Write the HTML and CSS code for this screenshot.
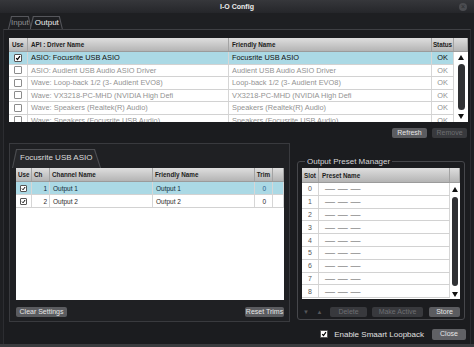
FILE: index.html
```html
<!DOCTYPE html>
<html lang="en">
<head>
    <meta charset="UTF-8">
    <meta name="viewport" content="width=device-width, initial-scale=1.0">
    <link rel="stylesheet" href="styles.css">
    <title>I-O Config</title>
</head>
<body>

<div class="window">
    <header class="titlebar">
        <span></span>
        <span class="title">I-O Config</span>
        <span class="close-dot">×</span>
    </header>

    <nav class="tabbar">
        <span class="tab">Input</span>
        <span class="tab active">Output</span>
    </nav>

    <main class="panel">
        <div class="grid drivers">
            <div class="grid-head">
                <div class="c">Use</div>
                <div class="c">API : Driver Name</div>
                <div class="c">Friendly Name</div>
                <div class="c center">Status</div>
                <div class="c"></div>
            </div>
            <div class="grid-body">
                <div class="rows">
                    <div class="grid-row selected">
                        <div class="c center"><span class="cb checked"><svg viewBox="0 0 8 8"><path d="M1.6 4.2 L3.3 6 L6.6 1.6"/></svg></span></div>
                        <div class="c">ASIO: Focusrite USB ASIO</div>
                        <div class="c">Focusrite USB ASIO</div>
                        <div class="c center">OK</div>
                    </div>
                    <div class="grid-row">
                        <div class="c center"><span class="cb"></span></div>
                        <div class="c">ASIO: Audient USB Audio ASIO Driver</div>
                        <div class="c">Audient USB Audio ASIO Driver</div>
                        <div class="c center">OK</div>
                    </div>
                    <div class="grid-row">
                        <div class="c center"><span class="cb"></span></div>
                        <div class="c">Wave: Loop-back 1/2 (3- Audient EVO8)</div>
                        <div class="c">Loop-back 1/2 (3- Audient EVO8)</div>
                        <div class="c center">OK</div>
                    </div>
                    <div class="grid-row">
                        <div class="c center"><span class="cb"></span></div>
                        <div class="c">Wave: VX3218-PC-MHD (NVIDIA High Defi</div>
                        <div class="c">VX3218-PC-MHD (NVIDIA High Defi</div>
                        <div class="c center">OK</div>
                    </div>
                    <div class="grid-row">
                        <div class="c center"><span class="cb"></span></div>
                        <div class="c">Wave: Speakers (Realtek(R) Audio)</div>
                        <div class="c">Speakers (Realtek(R) Audio)</div>
                        <div class="c center">OK</div>
                    </div>
                    <div class="grid-row">
                        <div class="c center"><span class="cb"></span></div>
                        <div class="c">Wave: Speakers (Focusrite USB Audio)</div>
                        <div class="c">Speakers (Focusrite USB Audio)</div>
                        <div class="c center">OK</div>
                    </div>
                </div>
                <div class="vscroll">
                    <span class="arrow up"></span>
                    <span class="thumb"></span>
                    <span class="arrow down"></span>
                </div>
            </div>
        </div>

        <div class="driver-actions">
            <button class="btn refresh">Refresh</button>
            <button class="btn off remove">Remove</button>
        </div>

        <div class="lower">
            <section class="channel-box">
                <div class="box-tabs">
                    <span class="tab device">Focusrite USB ASIO</span>
                </div>
                <div class="grid channels">
                    <div class="grid-head">
                        <div class="c">Use</div>
                        <div class="c">Ch</div>
                        <div class="c">Channel Name</div>
                        <div class="c">Friendly Name</div>
                        <div class="c center">Trim</div>
                        <div class="c"></div>
                    </div>
                    <div class="grid-row selected">
                        <div class="c center"><span class="cb checked"><svg viewBox="0 0 8 8"><path d="M1.6 4.2 L3.3 6 L6.6 1.6"/></svg></span></div>
                        <div class="c right">1</div>
                        <div class="c">Output 1</div>
                        <div class="c">Output 1</div>
                        <div class="c right trim">0</div>
                        <div class="c"></div>
                    </div>
                    <div class="grid-row">
                        <div class="c center"><span class="cb checked"><svg viewBox="0 0 8 8"><path d="M1.6 4.2 L3.3 6 L6.6 1.6"/></svg></span></div>
                        <div class="c right">2</div>
                        <div class="c">Output 2</div>
                        <div class="c">Output 2</div>
                        <div class="c right">0</div>
                        <div class="c"></div>
                    </div>
                </div>
                <div class="box-actions">
                    <button class="btn clear">Clear Settings</button>
                    <button class="btn reset">Reset Trims</button>
                </div>
            </section>

            <fieldset class="presets">
                <legend>Output Preset Manager</legend>
                <div class="grid preset-grid">
                    <div class="grid-head">
                        <div class="c center">Slot</div>
                        <div class="c">Preset Name</div>
                        <div class="c"></div>
                    </div>
                    <div class="grid-body">
                        <div class="rows">
                            <div class="grid-row"><div class="c center">0</div><div class="c dashes">— — —</div></div>
                            <div class="grid-row"><div class="c center">1</div><div class="c dashes">— — —</div></div>
                            <div class="grid-row"><div class="c center">2</div><div class="c dashes">— — —</div></div>
                            <div class="grid-row"><div class="c center">3</div><div class="c dashes">— — —</div></div>
                            <div class="grid-row"><div class="c center">4</div><div class="c dashes">— — —</div></div>
                            <div class="grid-row"><div class="c center">5</div><div class="c dashes">— — —</div></div>
                            <div class="grid-row"><div class="c center">6</div><div class="c dashes">— — —</div></div>
                            <div class="grid-row"><div class="c center">7</div><div class="c dashes">— — —</div></div>
                            <div class="grid-row"><div class="c center">8</div><div class="c dashes">— — —</div></div>
                        </div>
                        <div class="vscroll">
                            <span class="arrow up"></span>
                            <span class="thumb"></span>
                            <span class="arrow down"></span>
                        </div>
                    </div>
                </div>
                <div class="preset-actions">
                    <span class="move">▼ ▲</span>
                    <button class="btn off delete">Delete</button>
                    <button class="btn off make-active">Make Active</button>
                    <button class="btn store">Store</button>
                </div>
            </fieldset>
        </div>

        <footer class="footer">
            <span class="cb big checked"><svg viewBox="0 0 8 8"><path d="M1.6 4.2 L3.3 6 L6.6 1.6"/></svg></span>
            <span class="loopback">Enable Smaart Loopback</span>
            <button class="btn close">Close</button>
        </footer>
    </main>
</div>

</body>
</html>
```

FILE: styles.css
```css
* {
    box-sizing: border-box;
}

body {
    margin: 0;
    background: #1e1f22;
    font-family: "Liberation Sans", Arial, sans-serif;
    font-size: 7px;
    color: #e4e4e4;
}

.window {
    width: 474px;
    height: 347px;
    display: flex;
    flex-direction: column;
    background: #1e1f22;
    border-bottom: 3px solid #3a3b3e;
}

/* title bar */

.titlebar {
    height: 13px;
    flex-shrink: 0;
    display: grid;
    grid-template-columns: 1fr auto 1fr;
    align-items: center;
    background: linear-gradient(#36373b, #25262a);
}

.title {
    font-weight: bold;
    color: #ececec;
}

.close-dot {
    justify-self: end;
    width: 8px;
    height: 8px;
    margin-right: 7px;
    border-radius: 50%;
    background: #4b4c50;
    color: #2a2b2e;
    font-size: 7px;
    line-height: 8px;
    text-align: center;
}

/* tabs */

.tabbar {
    height: 16px;
    flex-shrink: 0;
    display: flex;
    align-items: flex-end;
    padding-left: 8px;
}

.tab {
    position: relative;
    z-index: 0;
    height: 13px;
    line-height: 13px;
    padding: 0 3px 0 3px;
    color: #8e8f93;
    font-size: 8px;
}

.tab::before,
.tab::after {
    content: "";
    position: absolute;
    z-index: -1;
    clip-path: polygon(0 100%, 3px 0, calc(100% - 3px) 0, 100% 100%);
}

.tab::before {
    inset: 0;
    background: #55565b;
}

.tab::after {
    inset: 1px 1px 0 1px;
    background: #1e1f22;
}

.tab.active {
    z-index: 1;
    margin-left: -2px;
    padding: 0 4px 0 5px;
    color: #ececec;
}

/* main panel */

.panel {
    flex: 1;
    display: flex;
    flex-direction: column;
    margin: 0 3px;
    padding: 8px 2px 0 5px;
    background: #1b1c1f;
    border: 1px solid #2c2d31;
    border-top-color: #3e3f43;
    border-bottom: none;
}

/* tables */

.grid {
    background: #fff;
    overflow: hidden;
    flex-shrink: 0;
    color: #929292;
}

.grid-head,
.grid-row {
    display: grid;
}

.grid-head {
    height: 14px;
    background: linear-gradient(#dedede, #b4b4b4);
    border-bottom: 1px solid #9b9b9b;
    color: #1d1d1d;
    font-weight: bold;
    font-size: 6.3px;
}

.grid-head .c {
    border-right: 1px solid #a3a3a3;
}

.grid-row {
    border-bottom: 1px solid #d2d2d2;
}

.grid-row.selected {
    background: #abd9e5;
    color: #111;
}

.c {
    display: flex;
    align-items: center;
    padding: 0 3px;
    border-right: 1px solid #d6d6d6;
    white-space: nowrap;
    overflow: hidden;
}

.c.center {
    justify-content: center;
}

.c.right {
    justify-content: flex-end;
}

.grid-body {
    display: flex;
}

.rows {
    flex: 1;
    overflow: hidden;
}

.cb {
    width: 7px;
    height: 7px;
    border: 1px solid #8c8c8c;
    border-radius: 1px;
    background: #fff;
    display: inline-flex;
}

.cb svg {
    width: 100%;
    height: 100%;
    fill: none;
    stroke: #000;
    stroke-width: 1.6;
}

.cb.checked {
    border-color: #555;
}

/* driver list */

.drivers {
    height: 84px;
}

.drivers .grid-head {
    grid-template-columns: 19px 201px 203px 22px 1fr;
}

.drivers .grid-row {
    height: 12.5px;
    font-size: 7.4px;
    grid-template-columns: 19px 201px 203px 1fr;
}

.drivers .cb {
    width: 8px;
    height: 8px;
}

.drivers .grid-body {
    height: 70px;
}

.drivers .vscroll {
    width: 14px;
    padding: 3px 0 3px;
}

.vscroll {
    display: flex;
    flex-direction: column;
    align-items: center;
    gap: 4px;
    background: #fff;
}

.arrow {
    width: 0;
    height: 0;
    border-left: 3.5px solid transparent;
    border-right: 3.5px solid transparent;
}

.arrow.up {
    border-bottom: 5px solid #111;
}

.arrow.down {
    border-top: 5px solid #111;
}

.thumb {
    flex: 1;
    width: 7px;
    border-radius: 4px;
    background: #303134;
}

.btn {
    height: 10px;
    padding: 0;
    border: none;
    border-radius: 2px;
    background: #5b5c60;
    color: #e6e6e6;
    font-family: inherit;
    font-size: 7px;
    line-height: 10px;
    white-space: nowrap;
}

.btn.off {
    background: #38393d;
    color: #6d6e72;
}

.driver-actions {
    display: flex;
    justify-content: flex-end;
    gap: 5px;
    height: 10px;
    margin: 6px 1px 0 0;
    flex-shrink: 0;
}

.refresh,
.remove {
    width: 35px;
}

/* lower area */

.lower {
    display: flex;
    align-items: flex-start;
    gap: 7px;
    margin-top: 5px;
    flex-shrink: 0;
}

.channel-box {
    width: 281px;
    height: 179px;
    display: flex;
    flex-direction: column;
    padding: 5px 5px 0 6px;
    background: #1f2023;
    border: 1px solid #393a3e;
}

.box-tabs {
    height: 19px;
    display: flex;
    align-items: flex-end;
}

.tab.device {
    height: 19px;
    line-height: 17px;
    width: 89px;
    margin-left: -4px;
    padding: 0 0 0 8px;
    font-size: 8px;
    color: #dcdcdc;
}

.tab.device::before {
    clip-path: polygon(0 100%, 4px 0, calc(100% - 6px) 0, 100% 100%);
    background: #4c4d51;
}

.tab.device::after {
    clip-path: polygon(0 100%, 4px 0, calc(100% - 6px) 0, 100% 100%);
    background: #26272a;
}

.channels {
    height: 132px;
    color: #2a2a2a;
}

.channels .grid-head,
.channels .grid-row {
    grid-template-columns: 16px 18px 103px 102px 18px 1fr;
}

.channels .grid-head .c {
    padding: 0 2px;
}

.channels .grid-row {
    height: 13px;
    font-size: 6.5px;
}

.channels .grid-row.selected {
    color: #0e2b38;
}

.channels .trim {
    color: #2a5f8a;
}

.channels .c.right {
    padding-right: 2px;
}

.channels .grid-row .c:nth-child(5) {
    padding-right: 6px;
}

.box-actions {
    display: flex;
    justify-content: space-between;
    margin-top: 7px;
}

.clear {
    width: 51px;
}

.reset {
    width: 39px;
}

/* presets */

.presets {
    width: 168px;
    margin: 14px 0 0;
    padding: 2px 4px 2px 4px;
    border: 1px solid #46474b;
    border-radius: 3px;
}

.presets legend {
    margin-left: 3px;
    padding: 0 2px;
    font-size: 8px;
    line-height: 9px;
    color: #d6d6d8;
}

.preset-grid {
    height: 131px;
    color: #5a5a5a;
}

.preset-grid .grid-head {
    height: 15px;
    grid-template-columns: 17px 131px 1fr;
}

.preset-grid .grid-row {
    height: 12.8px;
    grid-template-columns: 17px 1fr;
}

.preset-grid .grid-body {
    height: 116px;
}

.preset-grid .vscroll {
    width: 10px;
    padding: 3.5px 0 2.5px;
    gap: 0;
    justify-content: space-between;
}

.preset-grid .thumb {
    flex: 0 0 89px;
    width: 6px;
}

.dashes {
    padding-left: 6px;
    font-size: 10px;
    color: #8c8c8c;
}

.preset-actions {
    display: flex;
    align-items: center;
    margin-top: 8px;
    height: 10px;
}

.move {
    margin-left: 1px;
    margin-right: auto;
    font-size: 6px;
    color: #55565a;
    letter-spacing: 3px;
}

.delete {
    width: 37px;
    margin-right: 5px;
}

.make-active {
    width: 51px;
    margin-right: 6px;
}

.store {
    width: 31px;
}

/* footer */

.footer {
    display: flex;
    align-items: center;
    justify-content: flex-end;
    height: 12px;
    margin: 6px 2px 0 0;
}

.cb.big {
    width: 8px;
    height: 8px;
    margin-right: 6px;
}

.loopback {
    font-size: 8px;
    color: #e0e0e0;
    margin-right: 8px;
}

.close {
    width: 34px;
    height: 11px;
    background: #606165;
}
```
